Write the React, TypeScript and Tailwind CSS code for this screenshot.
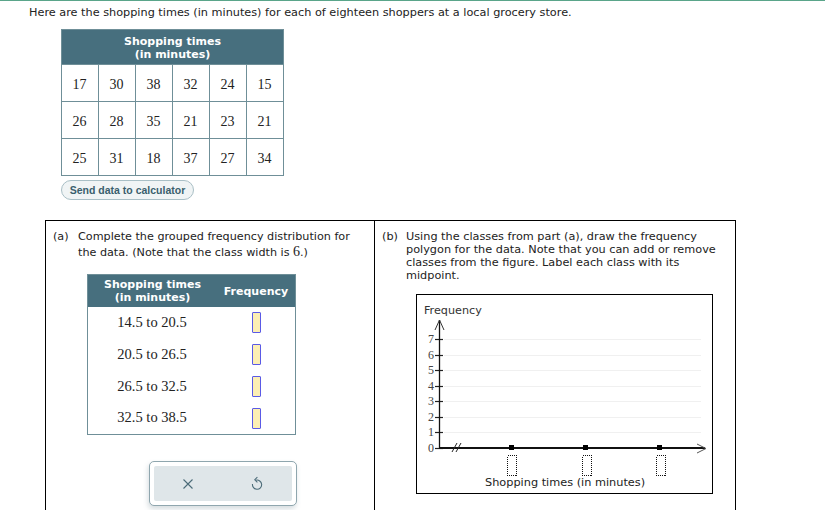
const sans = "font-['DejaVu_Sans',Verdana,sans-serif]";
const serif = "font-['Liberation_Serif','Times_New_Roman',serif]";

const shoppingTimes = [
  [17, 30, 38, 32, 24, 15],
  [26, 28, 35, 21, 23, 21],
  [25, 31, 18, 37, 27, 34],
];

const classes = ["14.5 to 20.5", "20.5 to 26.5", "26.5 to 32.5", "32.5 to 38.5"];

const ticks = [0, 1, 2, 3, 4, 5, 6, 7];
// x of the square mark and of the dotted label box, page coordinates
const marks = [
  [509, 507.5],
  [583, 582.5],
  [657, 656.5],
];

function Chart() {
  const ox = 417;
  const oy = 295;
  const yOf = (n: number) => Math.round(448 - oy - n * 15.55);
  const axisX = 439 - ox;
  return (
    <svg width="295" height="198" className="block">
      {ticks.slice(1).map((n) => (
        <line key={n} x1={axisX + 5} x2={701 - ox} y1={yOf(n) + 0.5} y2={yOf(n) + 0.5} stroke="#f0f0f0" />
      ))}
      <text x="7" y="19" fontSize="11.2" fill="#333" fontFamily="DejaVu Sans">Frequency</text>
      {ticks.map((n) => (
        <g key={n}>
          <text x={axisX - 8} y={yOf(n) + 4} fontSize="12" fill="#444" textAnchor="middle" fontFamily="Liberation Serif">{n}</text>
          <line x1={axisX - 4} x2={axisX + 4} y1={yOf(n) + 0.5} y2={yOf(n) + 0.5} stroke="#222" strokeWidth="1.2" />
        </g>
      ))}
      <line x1={axisX + 0.5} x2={axisX + 0.5} y1={25} y2={yOf(0)} stroke="#111" strokeWidth="1.3" />
      <path d={`M${axisX - 4} 35 L${axisX + 0.5} 25 L${axisX + 5} 35`} fill="none" stroke="#333" />
      <line x1={axisX} x2={288} y1={yOf(0)} y2={yOf(0)} stroke="#111" strokeWidth="2" />
      <path d="M280 149 L289 153.5 L280 158" fill="none" stroke="#555" />
      <path d={`M${axisX + 13} ${yOf(0) + 4} L${axisX + 18} ${yOf(0) - 5} M${axisX + 17} ${yOf(0) + 4} L${axisX + 22} ${yOf(0) - 5}`} stroke="#222" fill="none" />
      {marks.map(([m, b]) => (
        <g key={m}>
          <rect x={m - ox} y={yOf(0) - 3} width="5" height="5" fill="#000" />
          <rect x={b - ox} y="160.5" width="9" height="20" fill="#fff" stroke="#111" strokeDasharray="1 1" shapeRendering="crispEdges" />
        </g>
      ))}
      <text x="68" y="191" fontSize="11.3" fill="#222" fontFamily="DejaVu Sans">Shopping times (in minutes)</text>
    </svg>
  );
}

export default function App() {
  return (
    <div className={`${sans} h-[510px] w-[825px] overflow-hidden bg-white text-[11.28px] text-[#222]`}>
      <div className="h-px bg-[#5aa58a]" />
      <p className="ml-[29px] mt-[5px] h-[14px] leading-[14px]">
        Here are the shopping times (in minutes) for each of eighteen shoppers at a local grocery store.
      </p>

      <div className="ml-[61px] mt-[9px] w-[223px]">
        <div className="flex h-[36px] flex-col items-center justify-center border border-[#6f8f98] bg-[#476f7e] pt-[2px] text-[11px] font-bold leading-[13px] text-white">
          <span>Shopping times</span>
          <span>(in minutes)</span>
        </div>
        <div className={`${serif} grid grid-cols-6 border-l border-[#6f8f98] text-[14px] text-[#222]`}>
          {shoppingTimes.flat().map((v, i) => (
            <div key={i} className="flex h-[37px] items-center justify-center border-b border-r border-[#6f8f98] pr-[1px] pt-[2px]">
              {v}
            </div>
          ))}
        </div>
        <button className="mt-[4px] flex h-[20px] w-[133px] items-center justify-center rounded-full border border-[#a9bfc6] bg-[#f0f4f5] pt-[1px] font-['Liberation_Sans',Arial,sans-serif] text-[10.5px] font-bold text-[#3a5f6d]">
          Send data to calculator
        </button>
      </div>

      <div className="ml-[45px] mt-[20px] flex h-[300px] w-[691px] border-x border-t border-black">
        <div className="w-[329px] border-r border-black pl-[7px] pt-[8px]">
          <div className="flex text-[11.2px] leading-[16px]">
            <span className="w-[25px] shrink-0">(a)</span>
            <p>
              Complete the grouped frequency distribution for
              <br />
              the data. (Note that the class width is <span className={`${serif} text-[14px] leading-none`}>6</span>.)
            </p>
          </div>

          <div className="ml-[34px] mt-[13px] w-[209px] border border-[#6f8f98]">
            <div className="flex h-[32px] items-center bg-[#476f7e] text-[11px] font-bold leading-[13px] text-white">
              <div className="flex w-[129px] flex-col items-center">
                <span>Shopping times</span>
                <span>(in minutes)</span>
              </div>
              <div className="flex-1 text-center">Frequency</div>
            </div>
            {classes.map((c) => (
              <div key={c} className={`${serif} flex h-[31.75px] items-center text-[14.5px]`}>
                <div className="w-[129px] pr-[1px] text-center">{c}</div>
                <div className="flex flex-1 justify-center">
                  <div className="h-[21px] w-[9px] rounded-[1px] border border-[#5a5ae6] bg-[#fcefb4]" />
                </div>
              </div>
            ))}
          </div>

          <div className="ml-[96px] mt-[26px] h-[45px] w-[148px] rounded-[5px] border border-[#8fa6ae] bg-white p-[4px] shadow-[-1px_3px_5px_rgba(90,120,130,0.25)]">
            <div className="flex h-full items-center rounded-[2px] bg-[#dfe6e9] text-[#4b6b78]">
              <div className="flex w-[68px] justify-center pr-[1px]">
                <svg width="12" height="12" viewBox="0 0 12 12" fill="none" stroke="currentColor" strokeWidth="1.1">
                  <path d="M1.5 1.5 L10.5 10.5 M10.5 1.5 L1.5 10.5" />
                </svg>
              </div>
              <div className="flex flex-1 justify-center">
                <svg width="12" height="15" viewBox="0 0 12 15" fill="none" stroke="currentColor" strokeWidth="1.1">
                  <path d="M5 4.2 A4.6 4.6 0 1 1 1.5 8" />
                  <path d="M6.4 1 L3.8 3.8 L6.4 6.4" />
                </svg>
              </div>
            </div>
          </div>
        </div>

        <div className="flex-1 pl-[7px] pt-[9px]">
          <div className="flex leading-[13px]">
            <span className="w-[24px] shrink-0">(b)</span>
            <p>
              Using the classes from part (a), draw the frequency
              <br />
              polygon for the data. Note that you can add or remove
              <br />
              classes from the figure. Label each class with its
              <br />
              midpoint.
            </p>
          </div>
          <div className="ml-[34px] mt-[12px] h-[200px] w-[297px] border border-black">
            <Chart />
          </div>
        </div>
      </div>
    </div>
  );
}
